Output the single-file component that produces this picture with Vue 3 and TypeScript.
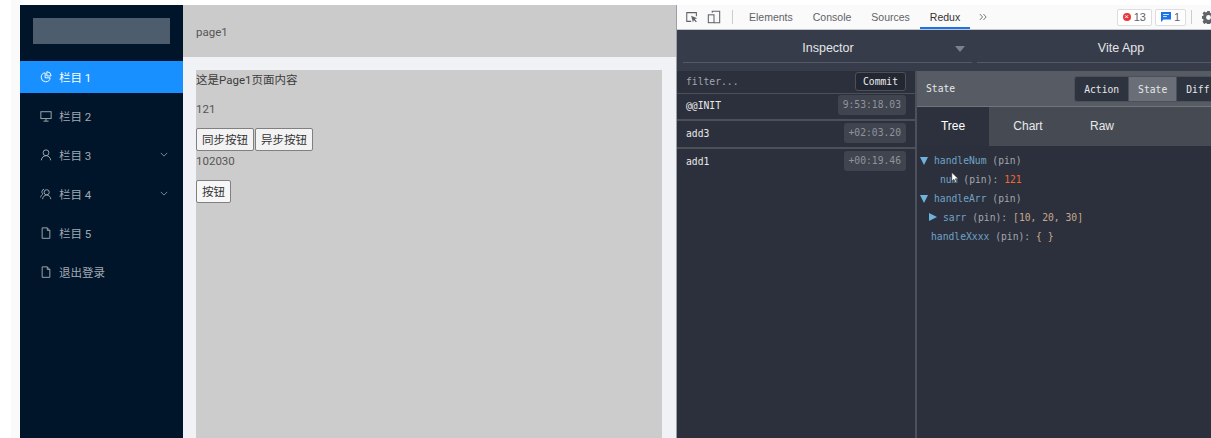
<script setup lang="ts">
const items = [
  { label: '栏目 1', icon: 'pie', active: true, arrow: false },
  { label: '栏目 2', icon: 'desktop', active: false, arrow: false },
  { label: '栏目 3', icon: 'user', active: false, arrow: true },
  { label: '栏目 4', icon: 'team', active: false, arrow: true },
  { label: '栏目 5', icon: 'file', active: false, arrow: false },
  { label: '退出登录', icon: 'file', active: false, arrow: false },
]
const actions = [
  { name: '@@INIT', time: '9:53:18.03' },
  { name: 'add3', time: '+02:03.20' },
  { name: 'add1', time: '+00:19.46' },
]
</script>

<template>
  <div class="page">
    <aside class="side">
      <div class="logo"></div>
      <ul class="menu">
        <li v-for="it in items" :key="it.label" class="mi" :class="{ on: it.active }">
          <svg class="mic" viewBox="0 0 14 14" fill="none" stroke="currentColor" stroke-width="1.1">
            <template v-if="it.icon === 'pie'">
              <path d="M6 2.200a5.200 5.200 0 1 0 5.800 5.800H6z" />
              <path d="M8 .8a5.200 5.200 0 0 1 5 5H8z" />
            </template>
            <template v-else-if="it.icon === 'desktop'">
              <rect x="1" y="2" width="12" height="8" />
              <path d="M7 10v3M4 13h6" />
            </template>
            <template v-else-if="it.icon === 'user'">
              <circle cx="7" cy="4.400" r="3.400" />
              <path d="M1.500 13.200c.3-3 2.500-5.400 5.500-5.400s5.200 2.400 5.500 5.400" />
            </template>
            <template v-else-if="it.icon === 'team'">
              <circle cx="7.800" cy="5" r="3" />
              <path d="M3 13c.3-2.700 2.300-4.800 4.800-4.800s4.500 2.100 4.800 4.800M4.800 1.500a3 3 0 0 0-1.500 5.300M.8 11c.2-1.700 1-3 2.500-3.800" />
            </template>
            <template v-else>
              <path d="M2.500 1h6l3 3v9.200h-9z" />
              <path d="M8.500 1v3h3" />
            </template>
          </svg>
          <span class="mlabel">{{ it.label }}</span>
          <svg v-if="it.arrow" class="arrow" viewBox="0 0 10 6" fill="none" stroke="currentColor" stroke-width="1.200">
            <path d="M1 1l4 4 4-4" />
          </svg>
        </li>
      </ul>
    </aside>

    <main class="main">
      <header class="head">page1</header>
      <section class="content">
        <div>这是Page1页面内容</div>
        <p class="n121">121</p>
        <div class="btns"><button>同步按钮</button><button>异步按钮</button></div>
        <div class="nums">102030</div>
        <div class="one"><button>按钮</button></div>
      </section>
    </main>

    <section class="dev">
      <div class="tb">
        <svg class="tic" viewBox="0 0 16 16" fill="none" stroke="#5f6368" stroke-width="1.200">
          <path d="M7 13H2V3h11v4" />
          <path d="M7 6.500l7 2.800-2.800 1.100 2.300 2.600-1 1-2.400-2.500-1 2.700z" fill="#5f6368" stroke="none" />
        </svg>
        <svg class="tic dev2" viewBox="0 0 16 16" fill="none" stroke="#5f6368" stroke-width="1.200">
          <path d="M6 3V1.500h8.500v13H8" />
          <rect x="1.500" y="5.500" width="6.500" height="9" />
        </svg>
        <i class="sep"></i>
        <span class="tab t1">Elements</span>
        <span class="tab">Console</span>
        <span class="tab">Sources</span>
        <span class="tab sel">Redux</span>
        <svg class="more" viewBox="0 0 9 8" fill="none" stroke="#666" stroke-width="1">
          <path d="M1 .7L4 4 1 7.300M5 .7L8 4 5 7.300" />
        </svg>
        <span class="spacer"></span>
        <span class="badge err"><i class="dot">×</i>13</span>
        <span class="badge msg"><svg class="flag" viewBox="0 0 12 12"><path d="M0 0h12v9H3l-3 3z" fill="#1a73e8" /><path d="M2.500 3h7M2.500 5.500h4.500" stroke="#fff" stroke-width="1" /></svg>1</span>
        <i class="sep s2"></i>
        <svg class="gear" viewBox="0 0 16 16"><path d="M6.500 0h3l.4 2.200 1.400.6 1.900-1.300 2.100 2.100-1.300 1.900.6 1.400 2.200.4v3l-2.200.4-.6 1.400 1.300 1.900-2.100 2.100-1.900-1.300-1.400.6-.4 2.200h-3l-.4-2.200-1.400-.6-1.900 1.300L.7 13.100 2 11.200l-.6-1.400L-.8 9.400v-3l2.200-.4.600-1.400L.7 2.700l2.100-2.100 1.900 1.300 1.400-.6zM8 5a3 3 0 1 0 0 6 3 3 0 0 0 0-6z" fill="#5f6368" fill-rule="evenodd" /></svg>
      </div>

      <div class="ins">
        <div class="sel-a">
          <span>Inspector</span>
          <i class="caret"></i>
        </div>
        <div class="sel-b"><span>Vite App</span></div>
      </div>

      <div class="panes">
        <div class="left">
          <div class="filter">
            <span class="ph">filter...</span>
            <span class="commit">Commit</span>
          </div>
          <div v-for="a in actions" :key="a.name" class="act">
            <span class="aname">{{ a.name }}</span>
            <span class="time">{{ a.time }}</span>
          </div>
        </div>
        <div class="right">
          <div class="st">
            <span>State</span>
            <div class="seg">
              <span class="sg">Action</span>
              <span class="sg cur">State</span>
              <span class="sg">Diff</span>
            </div>
          </div>
          <div class="vtabs">
            <span class="vt vcur">Tree</span>
            <span class="vt">Chart</span>
            <span class="vt">Raw</span>
          </div>
          <div class="tree">
            <div class="r"><i class="down"></i><b>handleNum</b> <em>(pin)</em></div>
            <div class="r r2"><b>num</b> <em>(pin)</em><u>:</u> <span class="num">121</span></div>
            <div class="r"><i class="down"></i><b>handleArr</b> <em>(pin)</em></div>
            <div class="r r3"><i class="rt"></i><b>sarr</b> <em>(pin)</em><u>:</u> <span class="arr">[10, 20, 30]</span></div>
            <div class="r r4"><b>handleXxxx</b> <em>(pin)</em><u>:</u> <span class="arr">{ }</span></div>
            <svg class="cursor" viewBox="0 0 10 14"><path d="M1 0v11l2.700-2.400 1.800 4 1.600-.7-1.800-3.900H9z" fill="#fff" stroke="#222" stroke-width=".6" /></svg>
          </div>
        </div>
      </div>
    </section>
  </div>
</template>

<style>
html, body { margin: 0; background: #fff; overflow: hidden; }
</style>

<style scoped>
.page {
  width: 1211px; height: 438px; box-sizing: border-box; padding: 5px 0 0 20px;
  display: flex; overflow: hidden; background: #fff;
  font-family: Roboto, "Noto Sans CJK SC", sans-serif; font-size: 11.500px; color: #4a4a4a;
  box-shadow: inset 11px 0 0 #fff, inset 20px 0 0 #fafafa;
}
.side { width: 163px; flex: none; background: #001529; display: flex; flex-direction: column; }
.logo { height: 26px; margin: 13px 13px 0; width: 137px; background: #4e5d6d; }
.menu { list-style: none; margin: 17px 0 0; padding: 0; display: flex; flex-direction: column; gap: 7px; }
.mi { height: 32px; box-sizing: border-box; padding: 0 0 1px 20px; display: flex; align-items: center; color: #a0aab4; font-size: 11.500px; }
.mi.on { background: #1890ff; color: #fff; }
.mic { width: 12px; height: 12px; margin-right: 7px; flex: none; }
.mlabel { flex: 1; }
.arrow { width: 8px; height: 5px; margin-right: 15px; margin-bottom: 1px; color: #7f8b96; }

.main { width: 493px; flex: none; background: #f0f2f5; display: flex; flex-direction: column; }
.head { height: 52px; background: #cccbcc; padding-left: 13px; line-height: 54px; color: #555; }
.content { flex: 1; margin: 13px 14px 0 13px; background: #cdcccd; color: #3c3c3c; line-height: 20px; }
.n121 { margin: 9px 0 9px; line-height: 20px; color: #555; }
.btns { display: flex; height: 23px; gap: 1px; }
button {
  font: inherit; font-size: 11.500px; color: #333; background: #f3f3f3; border: 1px solid #808080; border-radius: 2px;
  padding: 0 5px; height: 23px; line-height: 20px; margin: 0; box-sizing: border-box;
}
.nums { color: #555; }
.one { margin-top: 9px; }
.one button { background: #f7f7f7; }

.dev { flex: 1; min-width: 0; display: flex; flex-direction: column; border-left: 1px solid #9aa0a6; overflow: hidden; }
.tb { height: 24px; flex: none; display: flex; align-items: center; background: #fafafa; border-bottom: 1px solid #c4c7cc; color: #5f6368; font-family: "Liberation Sans", sans-serif; font-size: 10.500px; }
.tic { width: 14px; height: 14px; margin-left: 8px; flex: none; }
.dev2 { margin-left: 8px; }
.sep { width: 1px; height: 14px; background: #ccc; margin-left: 11px; flex: none; }
.tab { height: 24px; line-height: 25px; box-sizing: border-box; padding: 0 10px; flex: none; }
.t1 { margin-left: 6px; }
.sel { color: #333; border-bottom: 2px solid #1a73e8; }
.more { width: 8px; height: 8px; margin-left: 9px; flex: none; }
.spacer { flex: 1; }
.badge { height: 17px; box-sizing: border-box; border: 1px solid #ddd; border-radius: 2px; display: flex; align-items: center; padding: 0 5px; gap: 3px; background: #fff; font-size: 11px; color: #5f6368; }
.err { margin-right: 3px; }
.dot { width: 8px; height: 8px; border-radius: 50%; background: #e8343a; color: #fff; font-style: normal; font-size: 8px; line-height: 8px; text-align: center; }
.flag { width: 10px; height: 10px; }
.s2 { margin-left: 5px; }
.gear { width: 13px; height: 13px; margin: 0 -4px 0 10px; flex: none; }

.ins { height: 41px; flex: none; background: #363c49; display: flex; color: #e4e6ea; font-family: "Liberation Sans", sans-serif; font-size: 12.500px; padding: 0 0 0 6px; box-sizing: border-box; }
.sel-a, .sel-b { height: 33px; padding-top: 3px; border-bottom: 1px solid #555b66; box-sizing: border-box; display: flex; align-items: center; position: relative; justify-content: center; }
.sel-a { width: 289px; flex: none; }
.sel-a span { margin-left: 1px; }
.caret { position: absolute; right: 7px; top: 16px; border: 5px solid transparent; border-top: 6px solid #7b808a; border-bottom: 0; }
.sel-b { width: 288px; flex: none; margin-left: 5px; }

.panes { flex: 1; display: flex; min-height: 0; background: #2c303c; }
.left { width: 240px; flex: none; border-right: 2px solid #4c5059; font-family: "DejaVu Sans Mono", "Liberation Mono", monospace; font-size: 9.700px; color: #e8e8ea; box-sizing: border-box; }
.filter { height: 23px; display: flex; align-items: center; justify-content: space-between; padding: 0 9px 0 9px; border-bottom: 1px solid #4c5059; box-sizing: border-box; }
.ph { color: #a3a6ac; margin-bottom: 2px; }
.commit { width: 51px; height: 19px; box-sizing: border-box; border: 1px solid #4c5059; border-radius: 3px; background: #222732; text-align: center; line-height: 17px; margin-top: -2px; color: #eee; }
.act { height: 28px; display: flex; align-items: flex-start; justify-content: space-between; padding: 2px 9px 0 9px; border-bottom: 2px solid #4c5059; box-sizing: border-box; }
.act:nth-child(2) { height: 27px; padding-top: 1px; }
.act:last-child { border-bottom: 0; }
.aname { line-height: 21px; }
.time { background: #3f444f; color: #8f939b; border-radius: 3px; height: 20px; line-height: 20px; padding: 0 5px; }
.right { flex: 1; min-width: 0; display: flex; flex-direction: column; }
.st { height: 36px; flex: none; box-sizing: border-box; background: #575c64; border-bottom: 1px solid #70747b; display: flex; align-items: center; padding-left: 9px; font-family: "DejaVu Sans Mono", monospace; font-size: 9.700px; color: #e6e7e9; }
.seg { margin-left: 119px; display: flex; height: 26px; flex: none; }
.sg { box-sizing: border-box; padding: 0 8px; width: 55px; text-align: center; background: #2e3340; line-height: 25px; border: 1px solid #4c5059; border-left: 0; }
.sg:first-child { border-left: 1px solid #4c5059; border-radius: 3px 0 0 3px; width: 55px; }
.sg.cur { background: #6a6f77; width: 48px; padding: 0; }
.sg:last-child { width: 60px; padding-left: 9px; text-align: left; }
.vtabs { height: 39px; flex: none; display: flex; background: #454a53; font-family: "Liberation Sans", sans-serif; font-size: 12px; color: #e8e9eb; }
.vt { width: 78px; text-align: center; line-height: 38px; }
.vt:nth-child(3) { width: 70px; }
.vt:first-child { width: 72px; }
.vcur { background: #2d313d; color: #fff; }
.tree { position: relative; flex: 1; padding-top: 5px; font-family: "DejaVu Sans Mono", monospace; font-size: 9.700px; color: #8f96a3; }
.r { height: 19px; line-height: 19px; padding-left: 3px; white-space: nowrap; }
.r b { font-weight: 400; color: #6fa3c7; }
.r em { font-style: normal; color: #a2a6ad; }
.r u { text-decoration: none; color: #9aa; }
.r2 { padding-left: 23px; }
.r3 { padding-left: 12px; }
.r4 { padding-left: 14px; }
.down { display: inline-block; width: 0; height: 0; border: 4px solid transparent; border-top: 8px solid #6fb3dd; border-bottom: 0; margin-right: 6px; vertical-align: -1px; }
.rt { display: inline-block; width: 0; height: 0; border: 4px solid transparent; border-left: 8px solid #6fb3dd; border-right: 0; margin-right: 6px; vertical-align: 0; }
.num { color: #ee6a30; }
.arr { color: #c8a88c; }
.cursor { position: absolute; left: 34px; top: 26px; width: 8px; height: 12px; }
</style>
